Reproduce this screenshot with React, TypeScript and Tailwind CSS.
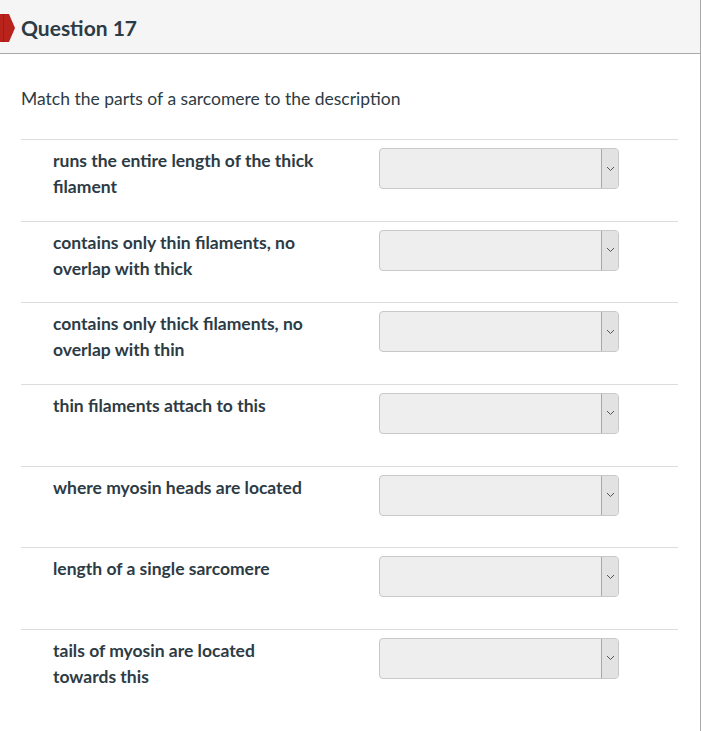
import React from 'react';

const rows: string[] = [
    'runs the entire length of the thick filament',
    'contains only thin filaments, no overlap with thick',
    'contains only thick filaments, no overlap with thin',
    'thin filaments attach to this',
    'where myosin heads are located',
    'length of a single sarcomere',
    'tails of myosin are located towards this',
];

const Flag = () => (
    <svg width="15" height="28" viewBox="0 0 15 28" className="block">
        <polygon points="0,0 9,0 15,14 9,28 0,28" fill="#b8241c" />
        <rect x="3" y="0" width="1" height="28" fill="#9c1b15" />
    </svg>
);

const FakeSelect = () => (
    <div className="w-[240px] h-[41px] rounded-[4px] border border-[#c8c8c8] bg-[#eeeeee] flex justify-end overflow-hidden">
        <div className="w-[17px] h-full border-l border-[#a8a8a8] bg-[#e2e2e2] flex items-center justify-center">
            <svg width="9" height="6" viewBox="0 0 9 6">
                <polyline points="1,1 4.5,4.5 8,1" fill="none" stroke="#555" strokeWidth="1" />
            </svg>
        </div>
    </div>
);

export default function App() {
    return (
        <div className="w-[701px] min-h-[731px] bg-white border-r border-[#a9a9a9] font-['Lato','Open_Sans',sans-serif] text-[#2d3b45]">
            {/* Header */}
            <div className="h-[54px] bg-[#f5f5f5] border-b border-[#a9a9a9] flex items-center">
                <div className="pt-[2px]"><Flag /></div>
                <h2 className="ml-[6px] mt-[2px] text-[21px] font-bold leading-none">Question 17</h2>
            </div>

            <div className="pl-[21px] pr-[22px]">
                <p className="mt-[33px] text-[17.5px] leading-[24px]">Match the parts of a sarcomere to the description</p>

                <div className="mt-[28px]">
                    {rows.map((label) => (
                        <div key={label} className="h-[81.67px] border-t border-[#dddddd] flex items-start pt-[8px]">
                            <div className="ml-[32px] w-[264px] text-[17.5px] font-bold leading-[26px]">{label}</div>
                            <div className="ml-[62px]">
                                <FakeSelect />
                            </div>
                        </div>
                    ))}
                </div>
            </div>
        </div>
    );
}
